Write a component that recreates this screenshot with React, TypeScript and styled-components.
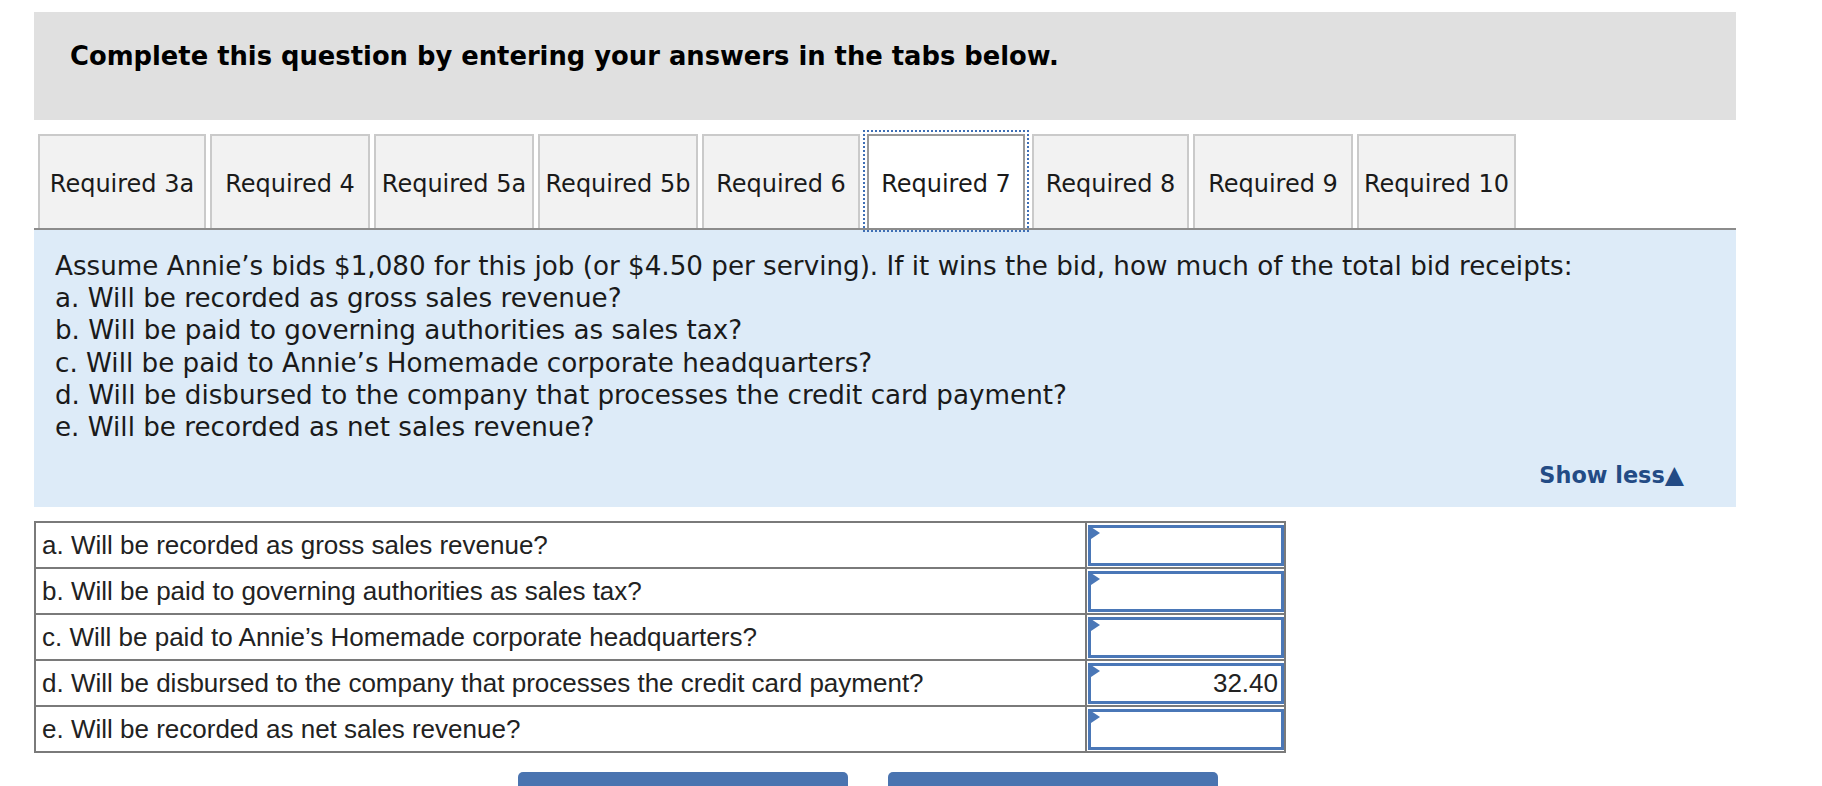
import styled, { createGlobalStyle } from 'styled-components';

const GlobalStyle = createGlobalStyle`
  html,
  body {
    margin: 0;
    padding: 0;
    overflow: hidden;
    background: #ffffff;
  }

  body {
    font-family: 'DejaVu Sans', Verdana, sans-serif;
    color: #1a1a1a;
  }
`;

const tabs = [
  { label: 'Required 3a', width: 168 },
  { label: 'Required 4', width: 160 },
  { label: 'Required 5a', width: 160 },
  { label: 'Required 5b', width: 160 },
  { label: 'Required 6', width: 158 },
  { label: 'Required 7', width: 158, active: true },
  { label: 'Required 8', width: 157 },
  { label: 'Required 9', width: 160 },
  { label: 'Required 10', width: 159 },
];

const questions = [
  'a. Will be recorded as gross sales revenue?',
  'b. Will be paid to governing authorities as sales tax?',
  'c. Will be paid to Annie\u2019s Homemade corporate headquarters?',
  'd. Will be disbursed to the company that processes the credit card payment?',
  'e. Will be recorded as net sales revenue?',
];

const answers = ['', '', '', '32.40', ''];

function App() {
  return (
    <>
      <GlobalStyle />
      <Page>
        <Header>
          <Title>Complete this question by entering your answers in the tabs below.</Title>
        </Header>

        <TabBar>
          {tabs.map((tab) => (
            <Tab key={tab.label} $width={tab.width} $active={!!tab.active}>
              {tab.label}
            </Tab>
          ))}
        </TabBar>

        <Panel>
          <Prompt>
            Assume Annie&rsquo;s bids $1,080 for this job (or $4.50 per serving). If it wins the bid, how much of
            the total bid receipts:
          </Prompt>
          {questions.map((q) => (
            <Prompt key={q}>{q}</Prompt>
          ))}
          <ShowLess>
            Show less<span>&#9650;</span>
          </ShowLess>
        </Panel>

        <AnswerTable>
          <tbody>
            {questions.map((q, i) => (
              <tr key={q}>
                <LabelCell>{q}</LabelCell>
                <InputCell>
                  <InputWrap>
                    <Marker />
                    <AnswerInput readOnly value={answers[i]} />
                  </InputWrap>
                </InputCell>
              </tr>
            ))}
          </tbody>
        </AnswerTable>

        <Actions>
          <ActionButton />
          <ActionButton />
        </Actions>
      </Page>
    </>
  );
}

const Page = styled.div`
  width: 1702px;
  padding: 12px 0 0 34px;
`;

const Header = styled.div`
  height: 108px;
  box-sizing: border-box;
  background-color: #e0e0e0;
  padding: 27px 36px 0;
`;

const Title = styled.h2`
  margin: 0;
  font-size: 25.8px;
  line-height: 34px;
  font-weight: bold;
  color: #000;
`;

const TabBar = styled.div`
  display: flex;
  align-items: flex-end;
  gap: 4px;
  margin-top: 14px;
  padding-left: 4px;
  border-bottom: 2px solid #8c8c8c;
`;

const Tab = styled.div<{ $width: number; $active: boolean }>`
  position: relative;
  z-index: 1;
  display: flex;
  align-items: center;
  justify-content: center;
  box-sizing: border-box;
  width: ${(p) => p.$width}px;
  height: 94px;
  padding-top: 4px;
  margin: ${(p) => (p.$active ? '0 3px' : '0')};
  font-size: 24px;
  white-space: nowrap;
  background-color: ${(p) => (p.$active ? '#ffffff' : '#f2f2f2')};
  border: 2px solid ${(p) => (p.$active ? '#9a9a9a' : '#cacaca')};
  border-bottom: none;
  outline: ${(p) => (p.$active ? '2px dotted #3f6fb5' : 'none')};
  outline-offset: 2px;
`;

const Panel = styled.div`
  background-color: #ddebf8;
  padding: 20px 52px 16px 21px;
`;

const Prompt = styled.div`
  font-size: 26.2px;
  line-height: 32.2px;
  color: #1a1a1a;
`;

const ShowLess = styled.div`
  display: flex;
  align-items: baseline;
  justify-content: flex-end;
  margin-top: 16px;
  font-size: 22.4px;
  line-height: 32px;
  font-weight: bold;
  color: #234b85;

  span {
    font-size: 25px;
  }
`;

const AnswerTable = styled.table`
  margin-top: 14px;
  width: 1252px;
  border-collapse: collapse;
  font-family: 'Liberation Sans', Arial, sans-serif;
`;

const LabelCell = styled.td`
  width: 1040px;
  height: 44px;
  padding: 0 6px;
  border: 2px solid #7a7a7a;
  font-size: 26px;
  color: #222;
  white-space: nowrap;
`;

const InputCell = styled.td`
  width: 200px;
  padding: 1px 0 1px 1px;
  border: 2px solid #7a7a7a;
`;

const InputWrap = styled.div`
  position: relative;
  height: 41px;
`;

const Marker = styled.span`
  position: absolute;
  z-index: 1;
  top: 0;
  left: 0;
  width: 0;
  height: 0;
  border-top: 8px solid transparent;
  border-bottom: 8px solid transparent;
  border-left: 12px solid #4a77b7;
`;

const AnswerInput = styled.input`
  display: block;
  box-sizing: border-box;
  width: 100%;
  height: 100%;
  margin: 0;
  padding: 0 3px 0 6px;
  border: 3px solid #4a77b7;
  background: #fff;
  font-family: 'Liberation Sans', Arial, sans-serif;
  font-size: 26px;
  color: #222;
  text-align: right;
  outline: none;
`;

const Actions = styled.div`
  display: flex;
  gap: 40px;
  margin-top: 19px;
  padding-left: 484px;
`;

const ActionButton = styled.button`
  width: 330px;
  height: 40px;
  border: none;
  border-radius: 5px 5px 0 0;
  background-color: #4a74b0;
`;

export default App;
